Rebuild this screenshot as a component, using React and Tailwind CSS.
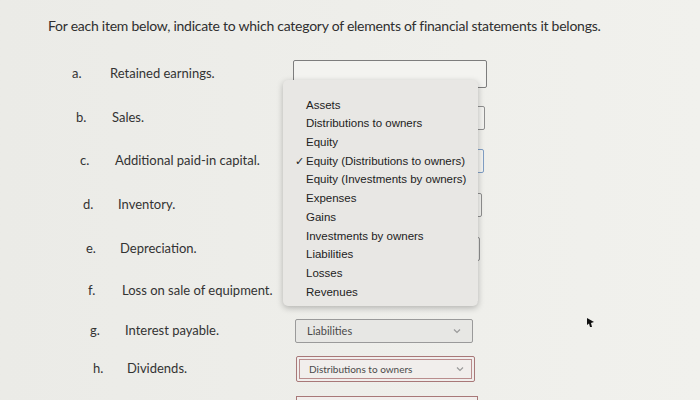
import React from 'react';

const rows = [
  { key: 'a.', text: 'Retained earnings.', h: 'h-[44px]', lab: 'pl-[72px]', txt: 'pl-[110px]', sel: 'w-[194px] ml-[293px] h-[28px] border-[#7d7d7d]' },
  { key: 'b.', text: 'Sales.', h: 'h-[43px]', lab: 'pl-[76px]', txt: 'pl-[112px]', sel: 'w-[192px] ml-[293px] h-[24px] border-[#8f8f8f]' },
  { key: 'c.', text: 'Additional paid-in capital.', h: 'h-[43px]', lab: 'pl-[80px]', txt: 'pl-[115px]', sel: 'w-[191px] ml-[293px] h-[24px] border-[#7f9ec4]' },
  { key: 'd.', text: 'Inventory.', h: 'h-[46px]', lab: 'pl-[83px]', txt: 'pl-[118px]', sel: 'w-[188px] ml-[294px] h-[24px] border-[#8f8f8f]' },
  { key: 'e.', text: 'Depreciation.', h: 'h-[42px]', lab: 'pl-[86px]', txt: 'pl-[120px]', sel: 'w-[186px] ml-[294px] h-[24px] border-[#8f8f8f]' },
  { key: 'f.', text: 'Loss on sale of equipment.', h: 'h-[42px]', lab: 'pl-[88px]', txt: 'pl-[122px]', sel: 'w-[184px] ml-[294px] h-[24px] border-[#8f8f8f]' },
];

const options = [
  'Assets',
  'Distributions to owners',
  'Equity',
  'Equity (Distributions to owners)',
  'Equity (Investments by owners)',
  'Expenses',
  'Gains',
  'Investments by owners',
  'Liabilities',
  'Losses',
  'Revenues',
];

const Chevron = () => (
  <svg width="8" height="6" viewBox="0 0 8 6" className="shrink-0">
    <path d="M1 1.5 L4 4.5 L7 1.5" fill="none" stroke="#9a9a9a" strokeWidth="1.2" />
  </svg>
);

const Row = ({ r }) => (
  <div className={`relative flex items-center ${r.h}`}>
    <span className={`absolute left-0 ${r.lab} text-[13px] text-[#333]`}>{r.key}</span>
    <span className={`absolute left-0 ${r.txt} text-[13px] text-[#333]`}>{r.text}</span>
    <div className={`${r.sel} border bg-[#f3f3f0] rounded-[2px]`} />
  </div>
);

export default function App() {
  return (
    <div
      className="relative w-[700px] h-[400px] overflow-hidden bg-gradient-to-r from-[#ebebe7] via-[#eeeeea] to-[#f1f1ed] text-[#333]"
      style={{ fontFamily: 'Lato, "Open Sans", sans-serif' }}
    >
      <div className="pt-[15px] pl-[48px] h-[52px] text-[14px] tracking-[-0.25px] text-[#2f2f2f]">
        For each item below, indicate to which category of elements of financial statements it belongs.
      </div>

      {rows.map((r) => (
        <Row key={r.key} r={r} />
      ))}

      <div className="relative flex items-center h-[38px]">
        <span className="absolute left-0 pl-[90px] text-[13px]">g.</span>
        <span className="absolute left-0 pl-[125px] text-[13px]">Interest payable.</span>
        <div className="ml-[295px] w-[178px] h-[24px] flex items-center justify-between px-[11px] border border-[#9a9a9a] bg-[#e7e7e4] rounded-[2px]">
          <span className="text-[11px] text-[#4a4a4a]">Liabilities</span>
          <Chevron />
        </div>
      </div>

      <div className="relative flex items-center h-[38px]">
        <span className="absolute left-0 pl-[93px] text-[13px]">h.</span>
        <span className="absolute left-0 pl-[127px] text-[13px]">Dividends.</span>
        <div className="ml-[296px] w-[179px] h-[26px] p-[2px] border border-[#a87878] bg-[#f1eeec] rounded-[2px]">
          <div className="h-full flex items-center justify-between pl-[9px] pr-[7px] border border-[#b98d8d]">
            <span className="text-[10px] text-[#4a4a4a]">Distributions to owners</span>
            <Chevron />
          </div>
        </div>
      </div>

      <div className="relative flex items-start h-[38px] pt-[8px]">
        <div className="ml-[296px] w-[182px] h-[26px] border border-[#a87878] bg-[#f1eeec]" />
      </div>

      {/* open dropdown menu */}
      <div
        className="absolute left-[283px] top-[80px] w-[195px] h-[226px] rounded-[5px] bg-[#e8e7e4] shadow-[0_2px_6px_rgba(0,0,0,0.25)] pt-[16px]"
        style={{ fontFamily: '"Liberation Sans", Arial, sans-serif' }}
      >
        {options.map((o) => (
          <div key={o} className="relative h-[18.7px] flex items-center pl-[23px] text-[11.5px] text-[#222]">
            {o === 'Equity (Distributions to owners)' && (
              <span className="absolute left-[12px] text-[11px]">✓</span>
            )}
            {o}
          </div>
        ))}
      </div>

      {/* mouse cursor */}
      <svg className="absolute left-[586px] top-[317px]" width="9" height="11" viewBox="0 0 9 11">
        <path d="M1 1 L8 5 L5 6 L6 10 L4 10 L3 6.5 L1 8 Z" fill="#111" />
      </svg>
    </div>
  );
}
